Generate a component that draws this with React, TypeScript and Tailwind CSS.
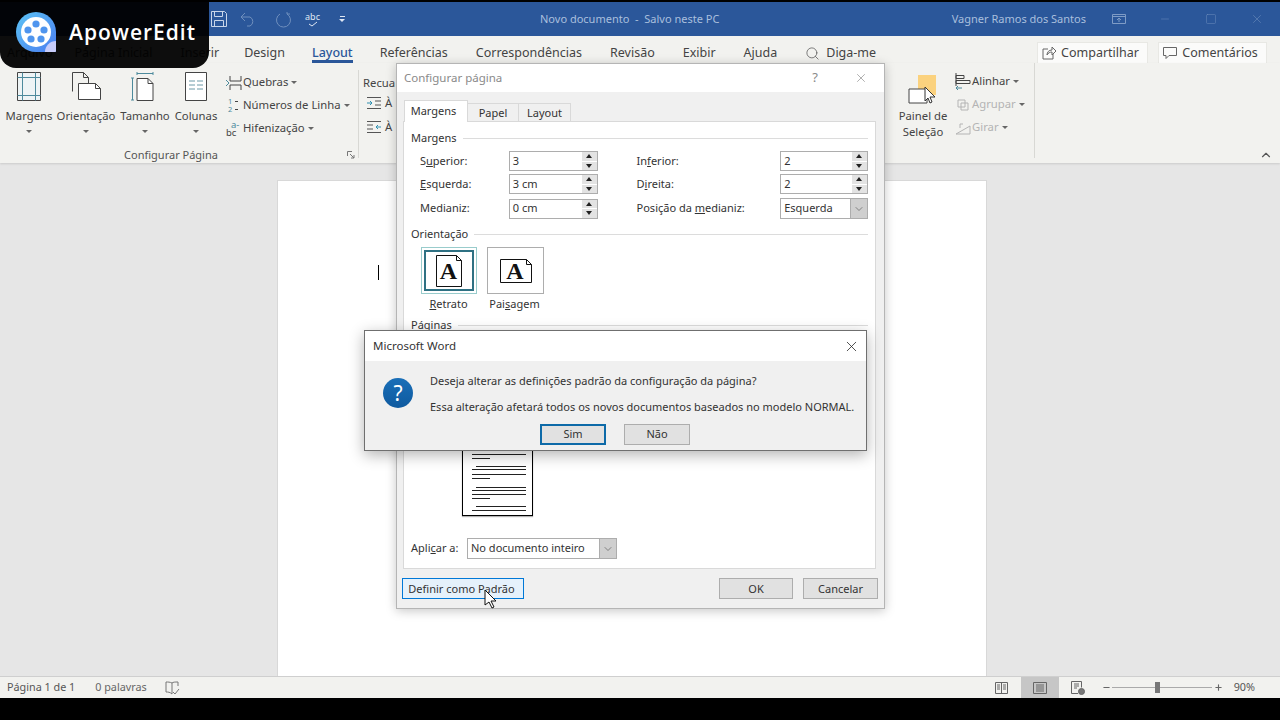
import React from "react";
import { ChevronDown, ChevronUp, Minus, Plus, Search, Square, X } from "lucide-react";

const font = "font-['Noto_Sans','Open_Sans',sans-serif]";

// lines of the page preview: y, x, width
const previewLines = [
  [61, 9, 54], [65, 9, 54], [69, 9, 18],
  [77, 13, 50], [80, 9, 54], [85, 9, 54], [89, 9, 18],
  [98, 13, 50], [101, 9, 54], [105, 9, 54], [109, 9, 18],
  [117, 13, 50], [121, 9, 54],
];

function Caret({ className = "" }: { className?: string }) {
  return <span className={`inline-block w-0 h-0 border-x-[3px] border-x-transparent border-t-[3px] border-t-[#666] ${className}`} />;
}

function BigButton({ label, width, icon }: { label: string; width: string; icon: React.ReactNode }) {
  return (
    <div className={`${width} flex flex-col items-center`}>
      <div className="h-[33px] flex items-center">{icon}</div>
      <div className="mt-[4px] text-[11.3px] leading-[17px] text-[#444] whitespace-nowrap">{label}</div>
      <Caret className="mt-[6px]" />
    </div>
  );
}

function SmallRow({ icon, label, gray }: { icon: React.ReactNode; label: string; gray?: boolean }) {
  return (
    <div className={`h-[23px] flex items-center text-[11.3px] ${gray ? "text-[#b4b4b4]" : "text-[#444]"}`}>
      <div className="w-[19px] shrink-0 flex justify-center">{icon}</div>
      <span className="whitespace-nowrap">{label}</span>
      <Caret className="ml-[3px]" />
    </div>
  );
}

function Spin({ value, width }: { value: string; width: string }) {
  return (
    <div className={`${width} h-[20px] border border-[#adadad] bg-white flex items-center text-[11px] text-[#333]`}>
      <span className="flex-1 pl-[3px]">{value}</span>
      <div className="w-[16px] h-full flex flex-col gap-px border-l border-white">
        <div className="flex-1 bg-[#e3e3e3] flex items-center justify-center">
          <span className="w-0 h-0 border-x-[3px] border-x-transparent border-b-[4px] border-b-[#222]" />
        </div>
        <div className="flex-1 bg-[#e3e3e3] flex items-center justify-center">
          <span className="w-0 h-0 border-x-[3px] border-x-transparent border-t-[4px] border-t-[#222]" />
        </div>
      </div>
    </div>
  );
}

function SelectBox({ value, width }: { value: string; width: string }) {
  return (
    <div className={`${width} h-[21px] border border-[#adadad] bg-white flex items-center text-[11px] text-[#333]`}>
      <span className="flex-1 pl-[3px] whitespace-nowrap">{value}</span>
      <div className="w-[17px] h-full bg-[#cfcfcf] flex items-center justify-center border-l border-[#adadad]">
        <ChevronDown size={12} strokeWidth={1.3} color="#555" />
      </div>
    </div>
  );
}

function GroupHead({ label }: { label: string }) {
  return (
    <div className="h-[14px] flex items-center text-[11px] text-[#333]">
      <span className="whitespace-nowrap">{label}</span>
      <div className="flex-1 h-px bg-[#dcdcdc] ml-[6px]" />
    </div>
  );
}

function DocA({ wide }: { wide?: boolean }) {
  return wide ? (
    <svg width="32" height="24" viewBox="0 0 32 24">
      <path d="M.5.5h26l5 5v18H.5z" fill="#fff" stroke="#111" />
      <path d="M26.5.5v5h5" fill="none" stroke="#111" />
      <text x="15" y="20" textAnchor="middle" fontFamily="'Liberation Serif',serif" fontWeight="700" fontSize="24" fill="#111">A</text>
    </svg>
  ) : (
    <svg width="26" height="32" viewBox="0 0 26 32">
      <path d="M.5.5h20l5 5v26H.5z" fill="#fff" stroke="#111" />
      <path d="M20.5.5v5h5" fill="none" stroke="#111" />
      <text x="12.5" y="24" textAnchor="middle" fontFamily="'Liberation Serif',serif" fontWeight="700" fontSize="24" fill="#111">A</text>
    </svg>
  );
}

function PageSetupDialog() {
  return (
    <div className="absolute z-10 left-[396px] top-[63px] w-[489px] h-[546px] bg-[#f0f0f0] border border-[#b5b5b5] shadow-[0_2px_10px_rgba(0,0,0,0.22)] flex flex-col">
      <div className="h-[28px] mb-[2px] bg-white flex items-center pl-[7px] text-[11.5px] text-[#8a8a8a] shrink-0">
        <span className="flex-1">Configurar página</span>
        <span className="mr-[36px] text-[13px]">?</span>
        <X size={14} strokeWidth={1} color="#777" className="mr-[16px]" />
      </div>
      <div className="flex pl-[7px] h-[28px] items-end text-[11px] text-[#333] relative z-10 shrink-0">
        <div className="w-[64px] h-[22px] pr-[5px] bg-white border border-[#d9d9d9] border-b-0 flex items-center justify-center">Margens</div>
        <div className="w-[51px] h-[19px] border border-l-0 border-[#d9d9d9] border-b-0 flex items-center justify-center">Papel</div>
        <div className="w-[52px] h-[19px] border border-l-0 border-[#d9d9d9] border-b-0 flex items-center justify-center">Layout</div>
      </div>
      <div className="mx-[6px] w-[473px] h-[448px] -mt-px bg-white border border-[#d9d9d9] pl-[7px] pr-[7px] pt-[9px] flex flex-col text-[11px] text-[#333] shrink-0">
        <GroupHead label="Margens" />
        <div className="mt-[6px] flex flex-col gap-[3px] pl-[9px]">
          <div className="flex items-center">
            <span className="w-[89px]">S<span className="underline">u</span>perior:</span>
            <Spin value="3" width="w-[89px]" />
            <span className="ml-[39px] w-[144px]">In<span className="underline">f</span>erior:</span>
            <Spin value="2" width="w-[88px]" />
          </div>
          <div className="flex items-center">
            <span className="w-[89px]"><span className="underline">E</span>squerda:</span>
            <Spin value="3 cm" width="w-[89px]" />
            <span className="ml-[39px] w-[144px]">D<span className="underline">i</span>reita:</span>
            <Spin value="2" width="w-[88px]" />
          </div>
          <div className="mt-px flex items-center">
            <span className="w-[89px]">Medianiz:</span>
            <Spin value="0 cm" width="w-[89px]" />
            <span className="ml-[39px] w-[144px]">Posição da <span className="underline">m</span>edianiz:</span>
            <SelectBox value="Esquerda" width="w-[88px]" />
          </div>
        </div>
        <div className="mt-[8px]"><GroupHead label="Orientação" /></div>
        <div className="mt-[6px] pl-[10px] flex gap-[10px] h-[47px]">
          <div className="w-[56px] h-[47px] border border-[#9cc] bg-white p-[2px] flex">
            <div className="flex-1 border-2 border-[#2f7183] flex items-center justify-center"><DocA /></div>
          </div>
          <div className="w-[57px] h-[47px] border border-[#adadad] flex items-center justify-center"><DocA wide /></div>
        </div>
        <div className="mt-[2px] pl-[10px] flex h-[15px]">
          <span className="w-[55px] text-center"><span className="underline">R</span>etrato</span>
          <span className="ml-[10px] w-[57px] text-center">Pai<span className="underline">s</span>agem</span>
        </div>
        <div className="mt-[7px]"><GroupHead label="Páginas" /></div>
        <div className="mt-[56px] ml-[51px] w-[71px] h-[128px] border border-black bg-white shadow-[0_1px_1px_rgba(0,0,0,0.3)]">
          <svg width="69" height="126" viewBox="0 0 69 126" stroke="#222">
            {previewLines.map(([y, x, w], i) => (
              <path key={i} d={`M${x} ${y + 0.5}h${w}`} />
            ))}
          </svg>
        </div>
        <div className="mt-[22px] flex items-center">
          <span className="w-[56px]">Apli<span className="underline">c</span>ar a:</span>
          <SelectBox value="No documento inteiro" width="w-[150px]" />
        </div>
      </div>
      <div className="mt-[9px] ml-[5px] w-[476px] flex items-center text-[11px] text-[#333] shrink-0">
        <div className="w-[122px] h-[21px] pt-px pr-[3px] border border-[#0078d7] bg-[#e5f1fb] flex items-center justify-center">Definir como Padrão</div>
        <div className="ml-auto w-[74px] h-[21px] pt-px border border-[#adadad] bg-[#e1e1e1] flex items-center justify-center">OK</div>
        <div className="ml-[10px] w-[75px] h-[21px] pt-px border border-[#adadad] bg-[#e1e1e1] flex items-center justify-center">Cancelar</div>
      </div>
    </div>
  );
}

function MessageBox() {
  return (
    <div className="absolute z-10 left-[364px] top-[330px] w-[503px] h-[121px] bg-[#f0f0f0] border border-[#6f6f6f] shadow-[0_4px_14px_rgba(0,0,0,0.3)] flex flex-col">
      <div className="h-[30px] bg-white flex items-center pl-[8px] text-[11.5px] text-[#333] shrink-0">
        <span className="flex-1">Microsoft Word</span>
        <X size={17} strokeWidth={1.1} color="#222" className="mr-[6px]" />
      </div>
      <div className="flex flex-1">
        <div className="w-[65px] pl-[18px] pt-[17px] shrink-0">
          <div className="w-[30px] h-[30px] rounded-full bg-gradient-to-b from-[#1a6fb8] to-[#0f5a9f] text-white flex items-center justify-center text-[21px] leading-none">?</div>
        </div>
        <div className="flex-1 pt-[12px] text-[11px] text-[#333]">
          <div className="leading-[16px] whitespace-nowrap">Deseja alterar as definições padrão da configuração da página?</div>
          <div className="mt-[10px] leading-[16px] whitespace-nowrap">Essa alteração afetará todos os novos documentos baseados no modelo NORMAL.</div>
          <div className="mt-[9px] ml-[110px] flex gap-[18px]">
            <div className="w-[66px] h-[21px] border-2 border-[#0d6aa8] bg-[#e1e1e1] flex items-center justify-center">Sim</div>
            <div className="w-[66px] h-[21px] border border-[#adadad] bg-[#e1e1e1] flex items-center justify-center">Não</div>
          </div>
        </div>
      </div>
    </div>
  );
}

function ApowerBadge() {
  return (
    <div className="absolute z-20 left-0 top-0 w-[209px] h-[68px] bg-black/95 rounded-b-[16px] flex items-center pl-[16px]">
      <svg width="40" height="40" viewBox="0 0 40 40" className="-mt-[4px]">
        <defs>
          <linearGradient id="lg" x1="0" y1="0" x2="1" y2="1">
            <stop offset="0" stopColor="#5cc4f5" />
            <stop offset="1" stopColor="#4a7df0" />
          </linearGradient>
        </defs>
        <path d="M20 0a20 20 0 0 1 20 20v19a1 1 0 0 1-1 1H20A20 20 0 0 1 20 0z" fill="url(#lg)" />
        <circle cx="20" cy="20" r="15" fill="#fff" />
        <circle cx="20" cy="12" r="3.6" fill="#4f95ee" />
        <circle cx="12" cy="18" r="3.6" fill="#4f95ee" />
        <circle cx="28" cy="18" r="3.6" fill="#4f95ee" />
        <circle cx="15" cy="27" r="3.6" fill="#4f95ee" />
        <circle cx="25" cy="27" r="3.6" fill="#4f95ee" />
        <path d="M29 40a11 11 0 0 1 11-11v10a1 1 0 0 1-1 1z" fill="#c7ccfa" />
      </svg>
      <span className="ml-[13px] -mt-[2px] text-white text-[21px] font-semibold tracking-[1px] font-['Open_Sans',sans-serif]">ApowerEdit</span>
    </div>
  );
}

export default function App() {
  return (
    <div className={`relative w-[1280px] h-[720px] overflow-hidden bg-black flex flex-col ${font}`}>
      {/* title bar */}
      <div className="mt-[2px] h-[34px] bg-[#2b579a] flex items-center text-[11px] text-[#a9bfdd] shrink-0">
        <div className="ml-[211px] flex items-center">
          <svg width="16" height="16" viewBox="0 0 16 16" fill="none" stroke="#c9d6ea">
            <path d="M.5.5h13l2 2v13H.5z" />
            <path d="M3.5.5v5h8v-5M3.5 15.5v-6h9v6" />
          </svg>
          <svg width="17" height="16" viewBox="0 0 17 16" fill="none" stroke="#6f8fbd" className="ml-[13px]">
            <path d="M1 6l4-4M1 6l4 4M1 6h9a5 5 0 0 1 0 9H7" />
          </svg>
          <svg width="17" height="17" viewBox="0 0 17 17" fill="none" stroke="#6f8fbd" className="ml-[18px]">
            <path d="M12 3a7 7 0 1 1-7 0M12 3V1M12 3h3" />
          </svg>
          <div className="ml-[13px] flex flex-col items-center w-[15px] text-[#dfe7f3] text-[9px] leading-[9px]">
            abc
            <svg width="10" height="6" viewBox="0 0 10 6" fill="none" stroke="#dfe7f3"><path d="M1 3l3 2 5-4" /></svg>
          </div>
          <div className="ml-[19px] flex flex-col items-center gap-[2px]">
            <div className="w-[5px] h-px bg-[#dfe7f3]" />
            <span className="w-0 h-0 border-x-[3px] border-x-transparent border-t-[3px] border-t-[#dfe7f3]" />
          </div>
        </div>
        <span className="ml-[195px] whitespace-pre">Novo documento  -  Salvo neste PC</span>
        <span className="ml-auto">Vagner Ramos dos Santos</span>
        <svg width="14" height="10" viewBox="0 0 14 10" fill="none" stroke="#7f9cc6" className="ml-[26px]">
          <path d="M.5.5h13v9H.5zM.5 2.5h13M7 8V4M5 6l2-2 2 2" />
        </svg>
        <Minus size={12} strokeWidth={1} color="#6f8fbd" className="ml-[33px]" />
        <Square size={12} strokeWidth={1} color="#6f8fbd" className="ml-[34px]" />
        <X size={14} strokeWidth={1} color="#6f8fbd" className="ml-[33px] mr-[16px]" />
      </div>

      {/* tabs */}
      <div className="h-[27px] bg-[#f2f2ef] flex items-center pl-[7px] pt-[7px] text-[12.5px] text-[#444] shrink-0">
        <div className="flex gap-[28px]">
          <span>Arquivo</span>
          <span className="-ml-[6px]">Página Inicial</span>
          <span>Inserir</span>
          <span className="-ml-[3px]">Design</span>
          <span className="-ml-px relative font-medium text-[#2b579a]">Layout<span className="absolute left-0 right-0 -bottom-[1px] h-[3px] bg-[#2b579a]" /></span>
          <span className="-ml-px">Referências</span>
          <span>Correspondências</span>
          <span>Revisão</span>
          <span>Exibir</span>
          <span>Ajuda</span>
          <span className="flex items-center gap-[6px]"><Search size={15} strokeWidth={1.2} color="#555" />Diga-me</span>
        </div>
        <div className="ml-auto mr-[13px] flex gap-[10px]">
          <div className="w-[111px] h-[22px] pr-[4px] bg-white/70 border border-[#e8e8e4] flex items-center justify-center gap-[5px]">
            <svg width="14" height="14" viewBox="0 0 14 14" fill="none" stroke="#666"><path d="M6 3H1v10h10V8M5 9c0-3 2-5 5-5V1l4 4-4 4V6c-2 0-4 1-5 3z" /></svg>
            Compartilhar
          </div>
          <div className="w-[109px] h-[22px] pr-[4px] bg-white/70 border border-[#e8e8e4] flex items-center justify-center gap-[5px]">
            <svg width="14" height="13" viewBox="0 0 14 13" fill="none" stroke="#666"><path d="M.5.5h13v8H6l-3 3v-3H.5z" /></svg>
            Comentários
          </div>
        </div>
      </div>

      {/* ribbon */}
      <div className="h-[100px] bg-[#f2f2ef] flex shadow-[0_1px_2px_rgba(0,0,0,0.12)] relative z-[1] shrink-0">
        <div className="w-[359px] border-r border-[#d8d8d4] mt-[7px] mb-[5px] relative flex flex-col shrink-0">
          <div className="flex pl-[3px] flex-1">
            <BigButton label="Margens" width="w-[52px]" icon={
              <svg width="24" height="29" viewBox="0 0 24 29" fill="none" stroke="#444">
                <path d="M.5.5h23v28H.5z" fill="#eef4f5" />
                <path d="M.5 5.5h23M.5 23.5h23M5.5.5v28M18.5.5v28" stroke="#4d8a9c" />
              </svg>
            } />
            <BigButton label="Orientação" width="w-[62px]" icon={
              <svg width="29" height="29" viewBox="0 0 29 29" fill="none" stroke="#444">
                <path d="M.5 19.5V.5h11l5 5v6" />
                <path d="M11.5.5v5h5" />
                <path d="M6.5 11.5h17l5 5v11h-22z" fill="#fff" />
                <path d="M23.5 11.5v5h5" />
              </svg>
            } />
            <BigButton label="Tamanho" width="w-[56px]" icon={
              <svg width="23" height="29" viewBox="0 0 23 29" fill="none" className="-ml-[5px]">
                <path d="M6 6.5h11l5 5v17H6z" fill="#fff" stroke="#444" />
                <path d="M17 6.5v5h5" stroke="#444" />
                <path d="M1.5 6v22M0 6h3M0 28h3M6 1.5h16M6 0v3M22 0v3" stroke="#4d8a9c" />
              </svg>
            } />
            <BigButton label="Colunas" width="w-[46px]" icon={
              <svg width="22" height="29" viewBox="0 0 22 29" fill="none" stroke="#444">
                <path d="M.5.5h21v28H.5z" fill="#fff" />
                <path d="M4 9h6M12 9h6M4 13h6M12 13h6M4 17h6M12 17h6" stroke="#6c9aa8" />
              </svg>
            } />
            <div className="ml-[5px] pt-[1px] flex flex-col">
              <SmallRow label="Quebras" icon={
                <svg width="17" height="16" viewBox="0 0 17 16" fill="none" stroke="#444">
                  <path d="M5 1v5h11V1M5 15v-5h11v5" />
                  <path d="M1 5l3 3-3 3" stroke="#4d8a9c" />
                </svg>
              } />
              <SmallRow label="Números de Linha" icon={
                <svg width="17" height="23" viewBox="0 0 17 23" fontSize="7.5" fill="#4d8a9c">
                  <text>
                    <tspan x="3" y="10">1</tspan>
                    <tspan x="3" y="18">2</tspan>
                  </text>
                  <path d="M10 7h3v1h-3zM10 15h3v1h-3z" fill="#444" />
                </svg>
              } />
              <SmallRow label="Hifenização" icon={
                <svg width="17" height="23" viewBox="0 0 17 23" fontSize="9.5" fill="#444">
                  <text>
                    <tspan x="6" y="11" fill="#4d8a9c">a-</tspan>
                    <tspan x="1" y="19">bc</tspan>
                  </text>
                </svg>
              } />
            </div>
          </div>
          <div className="absolute left-0 w-[342px] -bottom-[4px] text-center text-[11px] leading-[15px] text-[#555]">Configurar Página</div>
          <svg width="8" height="8" viewBox="0 0 8 8" fill="none" stroke="#777" className="absolute right-[3px] -bottom-[1px]">
            <path d="M.5 5V.5H5M3 3l4 4M7 4v3H4" />
          </svg>
        </div>
        <div className="w-[40px] pl-[4px] pt-[11px] flex flex-col text-[11.3px] text-[#444] shrink-0">
          <span className="leading-[17px]">Recua</span>
          <div className="mt-[5px] flex items-center gap-[3px] pl-[4px] h-[14px]">
            <svg width="15" height="14" viewBox="0 0 15 14" fill="none" stroke="#555" className="shrink-0"><path d="M0 1.5h14M8 5h6M8 9h6M0 12.5h14" /><path d="M0 7h5M3 5l2 2-2 2" stroke="#2f8fb0" /></svg>
            <span>À</span>
          </div>
          <div className="mt-[10px] flex items-center gap-[3px] pl-[4px] h-[14px]">
            <svg width="15" height="14" viewBox="0 0 15 14" fill="none" stroke="#555" className="shrink-0"><path d="M0 1.5h14M0 5h6M0 9h6M0 12.5h14" /><path d="M14 7H9M11 5L9 7l2 2" stroke="#2f8fb0" /></svg>
            <span>À</span>
          </div>
        </div>
        <div className="flex-1" />
        <div className="w-[50px] mr-[5px] pt-[12px] flex flex-col items-center shrink-0">
          <svg width="30" height="30" viewBox="0 0 30 30" fill="none">
            <path d="M10 0h18v20H10z" fill="#fbd27e" />
            <path d="M1 14h18v14H1z" fill="#fff" stroke="#444" />
            <path d="M17 12v14l3-3 2 5 2-1-2-5h5z" fill="#fff" stroke="#333" />
          </svg>
          <div className="mt-[3px] text-center text-[11.3px] leading-[16px] text-[#444] whitespace-nowrap">Painel de<br />Seleção</div>
        </div>
        <div className="w-[82px] pt-[7px] border-r border-[#d8d8d4] mb-[5px] shrink-0">
          <SmallRow label="Alinhar" icon={
            <svg width="16" height="17" viewBox="0 0 16 17" fill="none" stroke="#444">
              <path d="M1 0v13M1 2.5h8v3H1zM1 7.5h14v3H1z" />
              <path d="M1 15h6M1 15l2-2M1 15l2 2" stroke="#4d8a9c" />
            </svg>
          } />
          <SmallRow gray label="Agrupar" icon={
            <svg width="16" height="16" viewBox="0 0 16 16" fill="none" stroke="#b4b4b4">
              <path d="M3 3h7v7H3zM6 6h7v7H6z" />
            </svg>
          } />
          <SmallRow gray label="Girar" icon={
            <svg width="16" height="14" viewBox="0 0 16 14" fill="none" stroke="#b4b4b4">
              <path d="M1 13h14V5zM5 7V3h3" />
            </svg>
          } />
        </div>
        <div className="w-[245px] relative shrink-0">
          <ChevronUp size={14} strokeWidth={2} color="#555" className="absolute right-[7px] bottom-[1px]" />
        </div>
      </div>

      {/* document area */}
      <div className="flex-1 bg-[#e6e6e6] pl-[277px] pt-[17px] overflow-hidden">
        <div className="w-[710px] h-[520px] bg-white border border-[#d8d8d8] pl-[100px] pt-[84px]">
          <div className="w-px h-[15px] bg-black" />
        </div>
      </div>

      {/* status bar */}
      <div className="h-[22px] bg-[#f2f2ef] border-t border-[#cfcfcf] flex items-center pl-[7px] text-[10.8px] text-[#555] shrink-0 mb-[22px]">
        <span>Página 1 de 1</span>
        <span className="ml-[20px] text-[#666]">0 palavras</span>
        <svg width="15" height="14" viewBox="0 0 15 14" fill="none" stroke="#777" className="ml-[18px]">
          <path d="M7 2C5 1 3 1 1 1v10c2 0 4 0 6 2V2zM7 2c1-1 3-1 6-1v4M8 11l2 2 4-5" />
        </svg>
        <div className="ml-auto flex items-center h-full">
          <svg width="13" height="12" viewBox="0 0 13 12" fill="none" stroke="#666">
            <path d="M.5.5h12v11H.5zM6.5.5v11M2 3h3M2 5h3M2 7h3M8 3h3M8 5h3M8 7h3" />
          </svg>
          <div className="ml-[13px] w-[38px] h-full bg-[#c6c6c6] flex items-center justify-center">
            <svg width="14" height="12" viewBox="0 0 14 12" fill="none" stroke="#666">
              <path d="M.5.5h13v11H.5zM3 3h8M3 5h8M3 7h8M3 9h8" />
            </svg>
          </div>
          <svg width="14" height="14" viewBox="0 0 14 14" fill="none" stroke="#666" className="ml-[12px]">
            <path d="M7 12.5H.5V.5h10v6M3 3h5M3 5h5M3 7h3" />
            <circle cx="10.5" cy="10.5" r="3" fill="#777" />
          </svg>
          <Minus size={9} strokeWidth={3} color="#666" className="ml-[17px]" />
          <div className="ml-px w-[100px] h-px bg-[#aaa] relative">
            <div className="absolute left-[43px] -top-[5px] w-[5px] h-[11px] bg-[#777]" />
          </div>
          <Plus size={9} strokeWidth={3} color="#666" className="ml-[2px]" />
          <span className="ml-[11px] mr-[25px]">90%</span>
        </div>
      </div>

      <PageSetupDialog />
      <MessageBox />
      <ApowerBadge />

      {/* mouse pointer over the button */}
      <svg width="14" height="20" viewBox="0 0 14 20" className="absolute z-30 left-[484px] top-[589px]">
        <path d="M1 1v15l4-3 3 6 2-1-3-6h5z" fill="#fff" stroke="#111" />
      </svg>
    </div>
  );
}
